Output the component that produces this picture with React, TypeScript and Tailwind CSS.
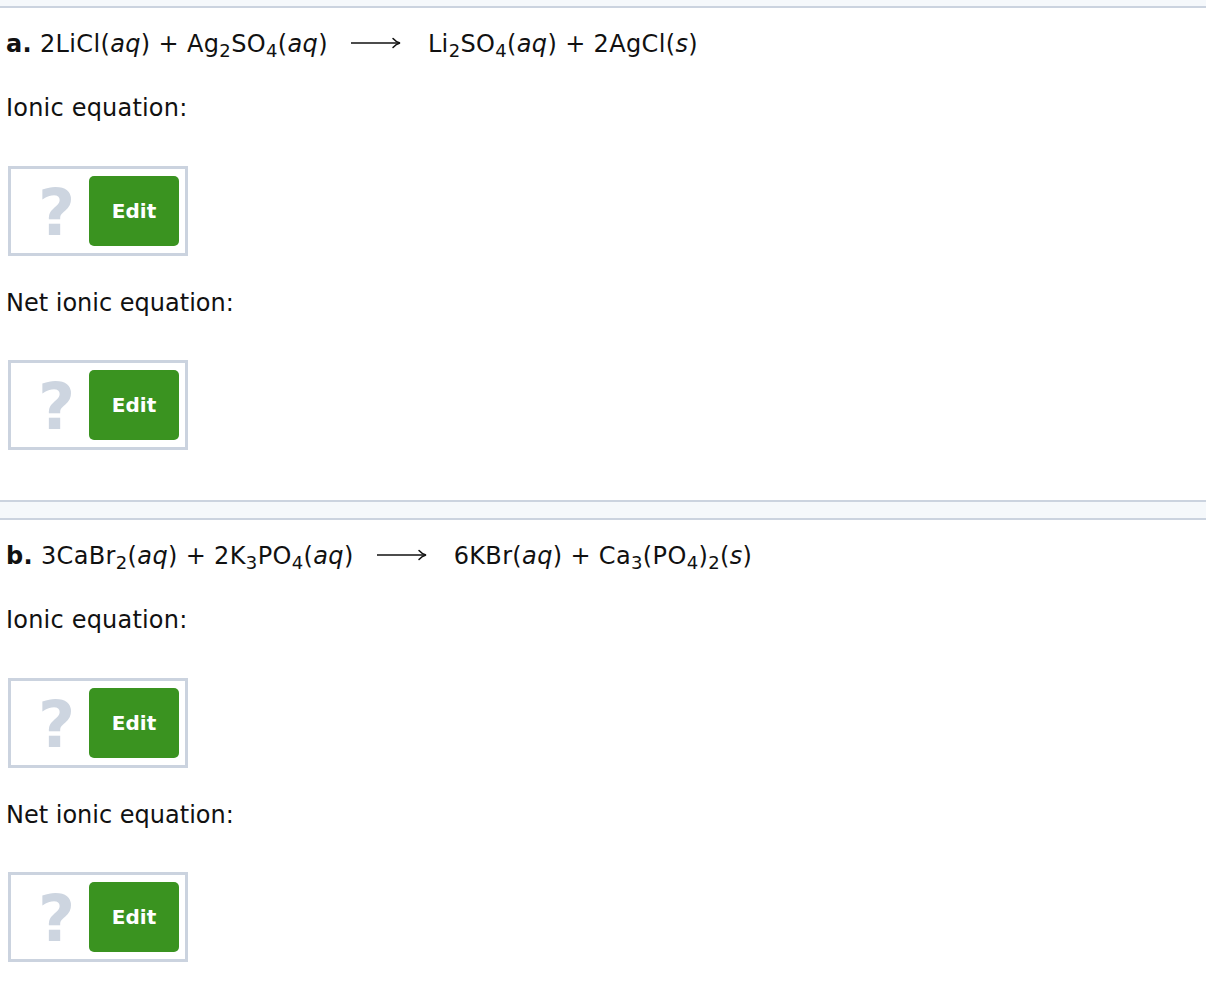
import React from "react";

// Lange Reaktionspfeil-Zeichnung (wie MathJax \longrightarrow)
function Pfeil() {
  return (
    <svg width="52" height="14" viewBox="0 0 52 14" className="inline-block align-[2px]">
      <path d="M1 7 H49" stroke="#111" strokeWidth="1.6" fill="none" />
      <path d="M43 2.5 Q46 6 50 7 Q46 8 43 11.5" stroke="#111" strokeWidth="1.5" fill="none" strokeLinecap="round" />
    </svg>
  );
}

function Antwortfeld() {
  return (
    <div className="ml-[8px] flex h-[90px] w-[180px] items-center border-[3px] border-[#cbd3df] bg-white pr-[6px]">
      <div className="flex flex-1 items-center justify-end pr-[14px] pt-[4px]">
        <span className="text-[64px] font-bold leading-none text-[#cdd5e0] blur-[0.6px]">?</span>
      </div>
      <button
        type="button"
        className="flex h-[70px] w-[90px] items-center justify-center rounded-[5px] bg-[#3a9320] text-[20px] font-bold text-white"
      >
        Edit
      </button>
    </div>
  );
}

function Abschnitt({ gleichung }: { gleichung: React.ReactNode }) {
  return (
    <section className="h-[492px] pt-[18px]">
      <div className="h-[36px] whitespace-nowrap pl-[6px] leading-[36px] tracking-[0.35px]">{gleichung}</div>
      <p className="mt-[28px] h-[36px] pl-[6px] leading-[36px] tracking-[0.2px]">Ionic equation:</p>
      <div className="mt-[40px]">
        <Antwortfeld />
      </div>
      <p className="mt-[29px] h-[36px] pl-[6px] leading-[36px]">Net ionic equation:</p>
      <div className="mt-[39px]">
        <Antwortfeld />
      </div>
    </section>
  );
}

export default function App() {
  const gleichungA = (
    <>
      <b>a.</b> 2LiCl(<i>aq</i>) + Ag<sub>2</sub>SO<sub>4</sub>(<i>aq</i>)
      <span className="ml-[22px] mr-[26px]">
        <Pfeil />
      </span>
      Li<sub>2</sub>SO<sub>4</sub>(<i>aq</i>) + 2AgCl(<i>s</i>)
    </>
  );

  const gleichungB = (
    <>
      <b>b.</b> 3CaBr<sub>2</sub>(<i>aq</i>) + 2K<sub>3</sub>PO<sub>4</sub>(<i>aq</i>)
      <span className="ml-[22px] mr-[26px]">
        <Pfeil />
      </span>
      6KBr(<i>aq</i>) + Ca<sub>3</sub>(PO<sub>4</sub>)<sub>2</sub>(<i>s</i>)
    </>
  );

  return (
    <div className="min-h-screen bg-white font-['DejaVu_Sans',Verdana,sans-serif] text-[24px] text-[#111]">
      <div className="h-[8px] border-b-2 border-[#cbd3df] bg-[#f5f8fb]" />
      <Abschnitt gleichung={gleichungA} />
      <div className="h-[20px] border-y-2 border-[#cbd3df] bg-[#f5f8fb]" />
      <Abschnitt gleichung={gleichungB} />
    </div>
  );
}
